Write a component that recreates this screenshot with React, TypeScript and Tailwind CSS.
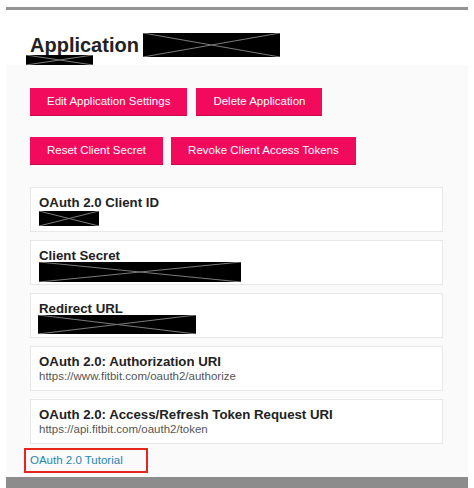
const font = { fontFamily: '"Liberation Sans", Arial, Helvetica, sans-serif' };

function Redacted({ className }: { className: string }) {
  return (
    <svg className={`block shrink-0 ${className}`} viewBox="0 0 100 100" preserveAspectRatio="none">
      <rect width="100" height="100" fill="#000" />
      <line x1="0" y1="0" x2="100" y2="100" stroke="#7a7a7a" strokeWidth="1" vectorEffect="non-scaling-stroke" />
      <line x1="0" y1="100" x2="100" y2="0" stroke="#7a7a7a" strokeWidth="1" vectorEffect="non-scaling-stroke" />
    </svg>
  );
}

function PinkButton({ label }: { label: string }) {
  return (
    <button className="h-[27px] bg-[#f20a5c] px-[17px] text-[11.5px] leading-none text-white shadow-[0_1px_0_#c4084a]">
      {label}
    </button>
  );
}

function InfoCard({ title, children }: { title: string; children: React.ReactNode }) {
  return (
    <div className="h-[45px] border border-[#e8e8e8] bg-white px-2 pt-[7px]">
      <div className="text-[13.25px] font-bold leading-4 text-[#222]">{title}</div>
      {children}
    </div>
  );
}

export default function App() {
  return (
    <div className="h-[488px] w-[474px] overflow-hidden bg-white pt-[7px]" style={font}>
      <div className="mx-[6px] flex h-[481px] flex-col">
        <div className="h-[3px] bg-[#939393]" />

        {/* header */}
        <div className="h-[55px] bg-white pl-[20px] pt-[23px]">
          <div className="flex h-6 items-center pl-[4px]">
            <h1 className="text-[20px] font-bold leading-6 text-[#222]">Application</h1>
            <Redacted className="ml-[4px] h-6 w-[137px]" />
          </div>
          <Redacted className="-mt-[2px] h-[10px] w-[67px]" />
        </div>

        {/* panel */}
        <div className="flex flex-1 flex-col bg-[#fafafa] pl-[24px] pr-[25px] pt-[23px]">
          <div className="flex gap-[9px]">
            <PinkButton label="Edit Application Settings" />
            <PinkButton label="Delete Application" />
          </div>
          <div className="mt-[22px] flex gap-2">
            <PinkButton label="Reset Client Secret" />
            <PinkButton label="Revoke Client Access Tokens" />
          </div>

          <div className="mt-[23px] flex flex-col gap-2">
            <InfoCard title="OAuth 2.0 Client ID">
              <Redacted className="h-[15px] w-[60px]" />
            </InfoCard>
            <InfoCard title="Client Secret">
              <Redacted className="-mt-[2px] h-[20px] w-[202px]" />
            </InfoCard>
            <InfoCard title="Redirect URL">
              <Redacted className="-mt-[2px] -ml-px h-[19px] w-[158px]" />
            </InfoCard>
            <InfoCard title="OAuth 2.0: Authorization URI">
              <div className="text-[11.5px] leading-[13px] text-[#555]">https://www.fitbit.com/oauth2/authorize</div>
            </InfoCard>
            <InfoCard title="OAuth 2.0: Access/Refresh Token Request URI">
              <div className="text-[11.5px] leading-[13px] text-[#555]">https://api.fitbit.com/oauth2/token</div>
            </InfoCard>
          </div>

          <div className="mt-[4px] -ml-[6px] flex h-[25px] w-[124px] items-center border-2 border-[#e4271d] pl-[4px]">
            <a href="#" className="text-[11.5px] leading-none text-[#2486b3]">
              OAuth 2.0 Tutorial
            </a>
          </div>
        </div>

        <div className="h-[11px] shrink-0 bg-[#8c8c8c]" />
      </div>
    </div>
  );
}
